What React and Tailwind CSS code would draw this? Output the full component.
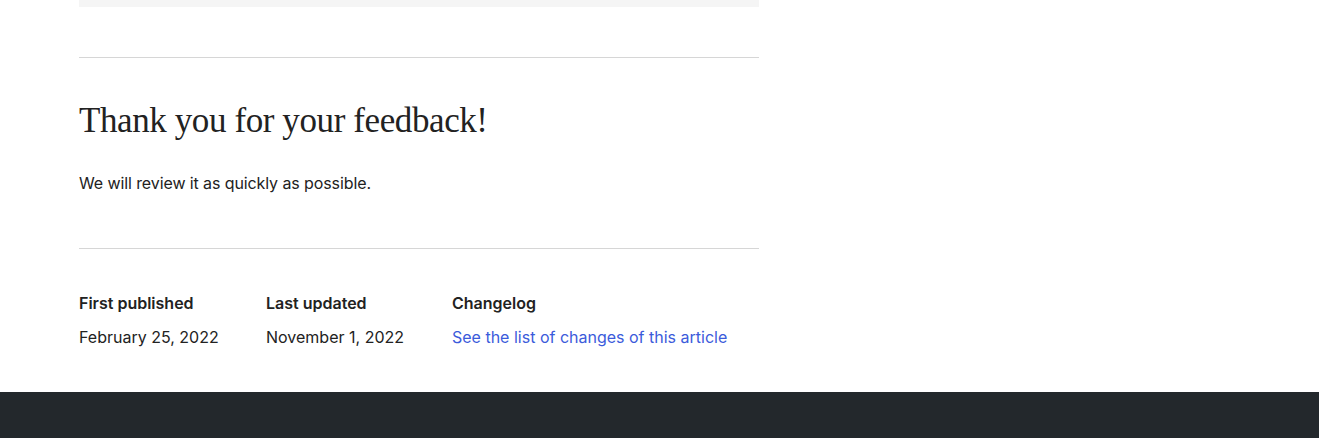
export default function App() {
  return (
    <div className="min-h-[438px] bg-white flex flex-col">
      <div className="w-[680px] ml-[79px] font-['Inter','Liberation_Sans',sans-serif] text-[#222]">
        <div className="h-[7px] bg-[#f5f5f5]" />
        <hr className="mt-[50px] border-t border-[#d6d6d6]" />
        <h2 className="mt-[39px] font-['Liberation_Serif',serif] text-[35px] leading-[48px] text-[#222] tracking-[-0.4px]">
          Thank you for your feedback!
        </h2>
        <p className="mt-[26px] text-[16px] leading-[24px] tracking-[-0.1px]">We will review it as quickly as possible.</p>
        <hr className="mt-[53px] border-t border-[#d6d6d6]" />
        <div className="mt-[42px] flex text-[16px] leading-[24px]">
          <div className="w-[187px]">
            <div className="font-semibold">First published</div>
            <div className="mt-[10px]">February 25, 2022</div>
          </div>
          <div className="w-[186px]">
            <div className="font-semibold">Last updated</div>
            <div className="mt-[10px]">November 1, 2022</div>
          </div>
          <div>
            <div className="font-semibold">Changelog</div>
            <a href="#" className="mt-[10px] block text-[#3b5bdb]">See the list of changes of this article</a>
          </div>
        </div>
      </div>
      <footer className="mt-[43px] flex-1 min-h-[46px] bg-[#23282c]" />
    </div>
  );
}
